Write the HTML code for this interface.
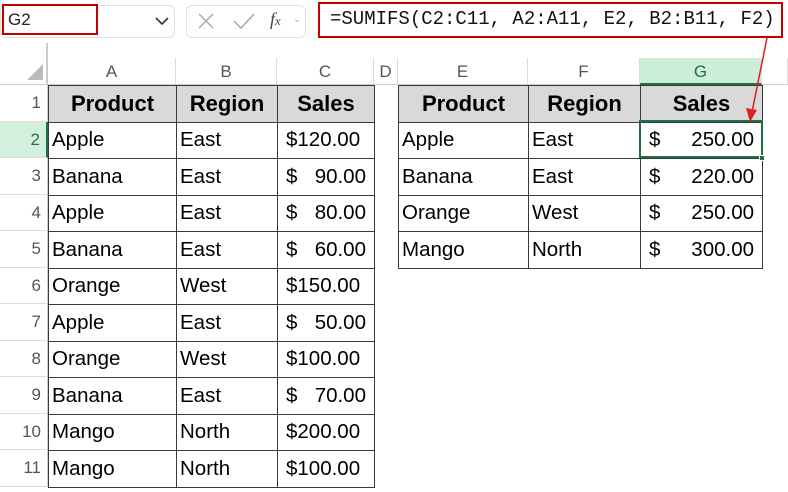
<!DOCTYPE html><html><head><style>
*{margin:0;padding:0;box-sizing:border-box}
body{width:788px;height:492px;background:#fff;position:relative;overflow:hidden;font-family:"Liberation Sans",Arial,sans-serif;}
.a{position:absolute}
table{position:absolute;border-collapse:collapse;table-layout:fixed}
td{border:1.5px solid #3a3a3a;font-size:20.5px;color:#000;padding:0 0 0 3px;height:36.5px;white-space:nowrap;overflow:hidden}
tr.h td{background:#d9d9d9;font-weight:bold;font-size:22px;text-align:center;padding:0}
.m{display:flex;justify-content:space-between;padding:0 8px 0 5px}
.ch{position:absolute;top:58px;height:27px;font-size:17px;color:#555;text-align:center;line-height:27px;border-right:1px solid #ddd;border-bottom:1px solid #ccc}
.rh{position:absolute;left:0;width:48px;height:36.5px;font-size:17px;color:#555;text-align:right;padding-right:6px;line-height:36px;border-bottom:1px solid #ddd;border-right:1px solid #ccc}
</style></head><body>
<div class="a" style="left:0;top:5px;width:175px;height:33px;border:1px solid #e0e0e0;border-radius:6px"></div>
<div class="a" style="left:2px;top:4px;width:96px;height:31px;border:2px solid #c00000"></div>
<div class="a" style="left:8px;top:10px;font-size:17px;color:#222">G2</div>
<svg class="a" style="left:155px;top:17px" width="14" height="9"><path d="M1 1 L7 7 L13 1" stroke="#333" stroke-width="1.6" fill="none"/></svg>
<div class="a" style="left:186px;top:5px;width:120px;height:33px;border:1px solid #e0e0e0;border-radius:6px"></div>
<svg class="a" style="left:197px;top:12px" width="18" height="18"><path d="M2 2L16 16M16 2L2 16" stroke="#aaa" stroke-width="1.5"/></svg>
<svg class="a" style="left:232px;top:12px" width="24" height="18"><path d="M2 9L9 16L22 2" stroke="#aaa" stroke-width="1.5" fill="none"/></svg>
<div class="a" style="left:270px;top:9px;font-size:18px;font-style:italic;font-family:'Liberation Serif',serif;color:#444">f<span style="font-size:13px">x</span></div>
<div class="a" style="left:293px;top:14px;font-size:10px;color:#aaa">&#8964;</div>
<div class="a" style="left:318px;top:2px;width:465px;height:36px;border:2px solid #c00000;background:#fff"></div>
<div class="a" style="left:330px;top:8px;font-family:'Liberation Mono',monospace;font-size:19px;color:#111">=SUMIFS(C2:C11, A2:A11, E2, B2:B11, F2)</div>
<div class="a" style="left:0;top:43px;width:48px;height:42px;border-right:2px solid #ccc;border-bottom:1px solid #ccc"></div>
<svg class="a" style="left:27px;top:64px" width="16" height="16"><path d="M16 0L16 16L0 16Z" fill="#bbb"/></svg>
<div class="ch" style="left:48px;width:128px">A</div>
<div class="ch" style="left:176px;width:101px">B</div>
<div class="ch" style="left:277px;width:97px">C</div>
<div class="ch" style="left:374px;width:24px">D</div>
<div class="ch" style="left:398px;width:130px">E</div>
<div class="ch" style="left:528px;width:112px">F</div>
<div class="ch" style="left:640px;width:122px;background:#cdeed9;color:#1e7145;border-bottom:2px solid #1e7145">G</div>
<div class="ch" style="left:762px;width:26px"></div>
<div class="rh" style="top:85px">1</div>
<div class="rh" style="top:121.5px;background:#d3f0df;color:#1e7145;border-right:2px solid #1e7145">2</div>
<div class="rh" style="top:158px">3</div>
<div class="rh" style="top:194.5px">4</div>
<div class="rh" style="top:231px">5</div>
<div class="rh" style="top:267.5px">6</div>
<div class="rh" style="top:304px">7</div>
<div class="rh" style="top:340.5px">8</div>
<div class="rh" style="top:377px">9</div>
<div class="rh" style="top:413.5px">10</div>
<div class="rh" style="top:450px">11</div>
<table style="left:48px;top:85px;width:326px">
<colgroup><col style="width:128px"><col style="width:101px"><col style="width:97px"></colgroup>
<tr class="h"><td>Product</td><td>Region</td><td>Sales</td></tr>
<tr><td>Apple</td><td>East</td><td><div class="m"><span>$120.00</span></div></td></tr>
<tr><td>Banana</td><td>East</td><td><div class="m"><span>$</span><span>90.00</span></div></td></tr>
<tr><td>Apple</td><td>East</td><td><div class="m"><span>$</span><span>80.00</span></div></td></tr>
<tr><td>Banana</td><td>East</td><td><div class="m"><span>$</span><span>60.00</span></div></td></tr>
<tr><td>Orange</td><td>West</td><td><div class="m"><span>$150.00</span></div></td></tr>
<tr><td>Apple</td><td>East</td><td><div class="m"><span>$</span><span>50.00</span></div></td></tr>
<tr><td>Orange</td><td>West</td><td><div class="m"><span>$100.00</span></div></td></tr>
<tr><td>Banana</td><td>East</td><td><div class="m"><span>$</span><span>70.00</span></div></td></tr>
<tr><td>Mango</td><td>North</td><td><div class="m"><span>$200.00</span></div></td></tr>
<tr><td>Mango</td><td>North</td><td><div class="m"><span>$100.00</span></div></td></tr>
</table>
<table style="left:398px;top:85px;width:364px">
<colgroup><col style="width:130px"><col style="width:112px"><col style="width:122px"></colgroup>
<tr class="h"><td>Product</td><td>Region</td><td>Sales</td></tr>
<tr><td>Apple</td><td>East</td><td><div class="m"><span>$</span><span>250.00</span></div></td></tr>
<tr><td>Banana</td><td>East</td><td><div class="m"><span>$</span><span>220.00</span></div></td></tr>
<tr><td>Orange</td><td>West</td><td><div class="m"><span>$</span><span>250.00</span></div></td></tr>
<tr><td>Mango</td><td>North</td><td><div class="m"><span>$</span><span>300.00</span></div></td></tr>
</table>
<div class="a" style="left:639px;top:120px;width:124px;height:38px;border:2px solid #1e7145"></div>
<div class="a" style="left:759px;top:155px;width:6px;height:6px;background:#1e7145;border:1px solid #fff"></div>
<svg class="a" style="left:0;top:0" width="788" height="492"><line x1="767" y1="38" x2="752" y2="112" stroke="#e02020" stroke-width="1.5"/><path d="M746 108L750 122L757 110Z" fill="#e02020"/></svg>
</body></html>
